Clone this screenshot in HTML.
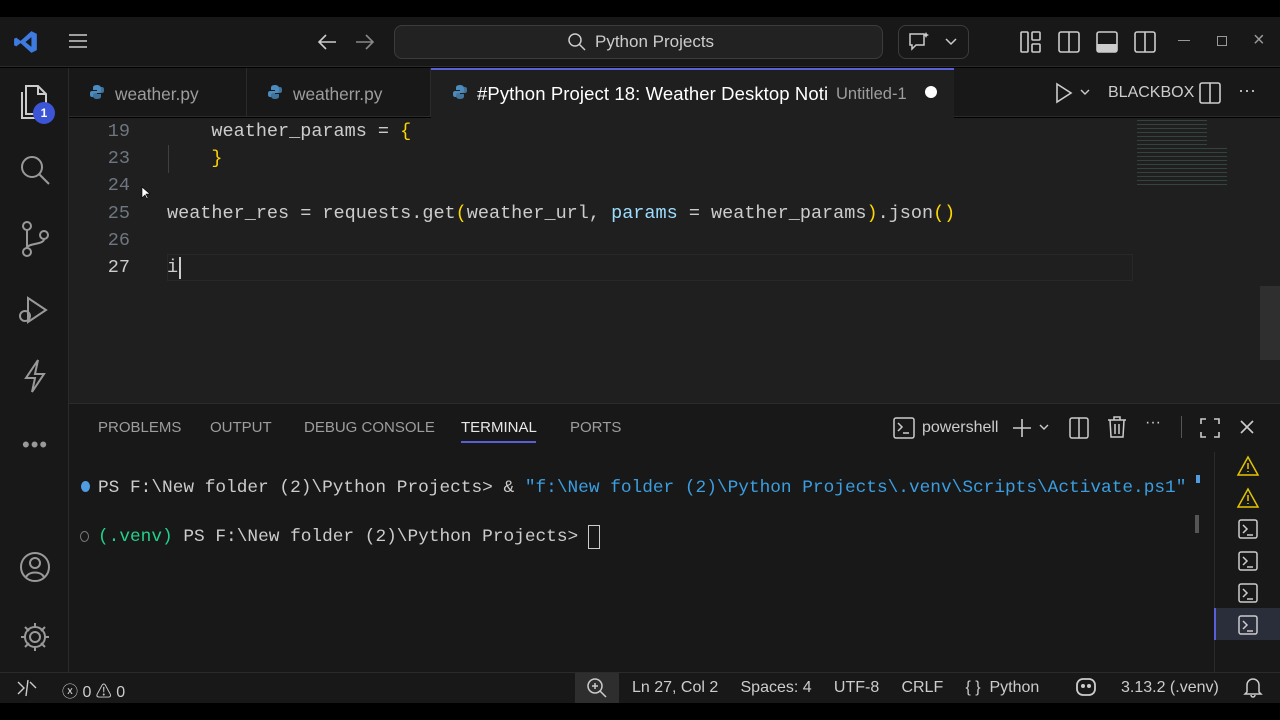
<!DOCTYPE html>
<html><head><style>
*{margin:0;padding:0;box-sizing:border-box}
body{width:1280px;height:720px;background:#000;position:relative;overflow:hidden;font-family:"Liberation Sans",sans-serif;color:#ccc}
.a{position:absolute}
.mono{font-family:"Liberation Mono",monospace;white-space:pre}
svg{position:absolute}
</style></head><body>
<div class="a" style="top:17px;left:0;width:1280px;height:50px;background:#181818;border-bottom:1px solid #2b2b2b"></div>
<svg style="left:13px;top:29px" width="26" height="26" viewBox="0 0 24 24"><path d="M17 2l5 2.5v15L17 22 7 13l-4 3-2-1V9l2-1 4 3 10-9zm0 5.5L11.5 12 17 16.5z" fill="#3d7be0"/></svg>
<svg style="left:68px;top:32px" width="20" height="18" viewBox="0 0 20 18"><path d="M1 3h18M1 9h18M1 15h18" stroke="#ccc" stroke-width="1.6"/></svg>
<svg style="left:316px;top:32px" width="22" height="20" viewBox="0 0 22 20"><path d="M20 10H3M10 3l-7 7 7 7" stroke="#ccc" stroke-width="1.6" fill="none"/></svg>
<svg style="left:354px;top:32px" width="22" height="20" viewBox="0 0 22 20"><path d="M2 10h17M12 3l7 7-7 7" stroke="#888" stroke-width="1.6" fill="none"/></svg>
<div class="a" style="left:394px;top:25px;width:489px;height:34px;border:1px solid #3c3c3c;border-radius:8px;background:#222"></div>
<svg style="left:567px;top:32px" width="20" height="20" viewBox="0 0 20 20"><circle cx="8" cy="8" r="6" stroke="#ccc" stroke-width="1.5" fill="none"/><path d="M12.5 12.5L18 18" stroke="#ccc" stroke-width="1.5"/></svg>
<div class="a" style="left:595px;top:32px;font-size:17px;color:#ccc">Python Projects</div>
<div class="a" style="left:898px;top:25px;width:71px;height:34px;border:1px solid #3c3c3c;border-radius:8px"></div>
<svg style="left:906px;top:30px" width="60" height="24" viewBox="0 0 60 24"><path d="M4 4h14v11H10l-4 4v-4H4z" stroke="#ccc" stroke-width="1.5" fill="none"/><path d="M20 2l1 2 2 1-2 1-1 2-1-2-2-1 2-1z" fill="#ccc"/><path d="M40 9l5 5 5-5" stroke="#ccc" stroke-width="1.5" fill="none"/></svg>
<svg style="left:1020px;top:30px" width="140" height="24" viewBox="0 0 140 24"><g stroke="#ccc" stroke-width="1.6" fill="none"><rect x="1" y="2" width="7" height="20" rx="1"/><rect x="12" y="2" width="8" height="8" rx="1"/><rect x="12" y="14" width="8" height="8" rx="1"/><rect x="39" y="2" width="20" height="20" rx="2"/><path d="M49 2v20"/><rect x="77" y="2" width="20" height="20" rx="2"/><rect x="115" y="2" width="20" height="20" rx="2"/><path d="M125 2v20"/></g><rect x="77" y="14" width="20" height="8" fill="#ccc"/></svg>
<div class="a" style="left:1178px;top:40px;width:12px;height:1px;background:#999"></div>
<div class="a" style="left:1217px;top:36px;width:10px;height:10px;border:1px solid #999"></div>
<div class="a" style="left:1253px;top:29px;font-size:20px;color:#999">×</div>

<div class="a" style="left:0;top:68px;width:69px;height:604px;background:#181818;border-right:1px solid #2b2b2b"></div>
<svg style="left:18px;top:82px" width="34" height="40" viewBox="0 0 34 40"><path d="M8 4h12l8 8v20H8z M20 4v8h8 M4 10v26h18" stroke="#ccc" stroke-width="2" fill="none"/></svg>
<div class="a" style="left:33px;top:102px;width:22px;height:22px;border-radius:50%;background:#3b55d6;color:#fff;font-size:12px;font-weight:bold;text-align:center;line-height:22px">1</div>
<svg style="left:18px;top:153px" width="34" height="34" viewBox="0 0 34 34"><circle cx="14" cy="14" r="10" stroke="#999" stroke-width="2" fill="none"/><path d="M21 21l10 10" stroke="#999" stroke-width="2"/></svg>
<svg style="left:18px;top:220px" width="34" height="38" viewBox="0 0 34 38"><g stroke="#999" stroke-width="2" fill="none"><circle cx="9" cy="6" r="4"/><circle cx="9" cy="32" r="4"/><circle cx="26" cy="15" r="4"/><path d="M9 10v18M26 19c0 6-17 4-17 9"/></g></svg>
<svg style="left:16px;top:292px" width="36" height="36" viewBox="0 0 36 36"><g stroke="#999" stroke-width="2" fill="none"><path d="M12 6l18 12-18 12z"/><circle cx="9" cy="24" r="5"/></g></svg>
<svg style="left:20px;top:358px" width="30" height="36" viewBox="0 0 30 36"><path d="M18 2L6 20h9l-3 14 12-18h-9z" stroke="#999" stroke-width="2" fill="none"/></svg>
<div class="a" style="left:22px;top:432px;font-size:22px;color:#999;letter-spacing:1px">•••</div>
<svg style="left:18px;top:550px" width="34" height="34" viewBox="0 0 34 34"><g stroke="#999" stroke-width="2" fill="none"><circle cx="17" cy="17" r="14"/><circle cx="17" cy="13" r="5"/><path d="M8 27c3-6 15-6 18 0"/></g></svg>
<svg style="left:18px;top:620px" width="34" height="34" viewBox="0 0 34 34"><g stroke="#999" stroke-width="2" fill="none"><circle cx="17" cy="17" r="5"/><path d="M17 3v5M17 26v5M3 17h5M26 17h5M7 7l4 4M23 23l4 4M7 27l4-4M23 11l4-4"/><circle cx="17" cy="17" r="10"/></g></svg>

<div class="a" style="left:69px;top:68px;width:1211px;height:49px;background:#181818;border-bottom:1px solid #2b2b2b"></div>
<div class="a" style="left:69px;top:68px;width:178px;height:49px;border-right:1px solid #2b2b2b"></div>
<div class="a" style="left:247px;top:68px;width:184px;height:49px;border-right:1px solid #2b2b2b"></div>
<div class="a" style="left:431px;top:68px;width:523px;height:50px;background:#1f1f1f;border-top:2px solid #5a5fd6"></div>
<svg style="left:89px;top:84px" width="16" height="16" viewBox="0 0 16 16"><path d="M8 1C4 1 4 3 4 4v2h4v1H3C1 7 1 9 1 10s0 3 2 3h1v-2c0-1 1-2 2-2h4c1 0 2-1 2-2V4c0-2-2-3-4-3z" fill="#4b8bbe"/><path d="M8 15c4 0 4-2 4-3v-2H8V9h5c2 0 2-2 2-3s0-3-2-3h-1v2c0 1-1 2-2 2H6c-1 0-2 1-2 2v3c0 2 2 3 4 3z" fill="#4b8bbe" opacity=".8"/></svg>
<svg style="left:267px;top:84px" width="16" height="16" viewBox="0 0 16 16"><path d="M8 1C4 1 4 3 4 4v2h4v1H3C1 7 1 9 1 10s0 3 2 3h1v-2c0-1 1-2 2-2h4c1 0 2-1 2-2V4c0-2-2-3-4-3z" fill="#4b8bbe"/><path d="M8 15c4 0 4-2 4-3v-2H8V9h5c2 0 2-2 2-3s0-3-2-3h-1v2c0 1-1 2-2 2H6c-1 0-2 1-2 2v3c0 2 2 3 4 3z" fill="#4b8bbe" opacity=".8"/></svg>
<svg style="left:452px;top:84px" width="16" height="16" viewBox="0 0 16 16"><path d="M8 1C4 1 4 3 4 4v2h4v1H3C1 7 1 9 1 10s0 3 2 3h1v-2c0-1 1-2 2-2h4c1 0 2-1 2-2V4c0-2-2-3-4-3z" fill="#4b8bbe"/><path d="M8 15c4 0 4-2 4-3v-2H8V9h5c2 0 2-2 2-3s0-3-2-3h-1v2c0 1-1 2-2 2H6c-1 0-2 1-2 2v3c0 2 2 3 4 3z" fill="#4b8bbe" opacity=".8"/></svg>
<div class="a" style="left:115px;top:84px;font-size:17.3px;color:#9d9d9d">weather.py</div>
<div class="a" style="left:293px;top:84px;font-size:17.3px;color:#9d9d9d">weatherr.py</div>
<div class="a" style="left:477px;top:83px;font-size:18.5px;color:#fff;letter-spacing:0.1px">#Python Project 18: Weather Desktop Noti</div>
<div class="a" style="left:836px;top:85px;font-size:16.5px;color:#9d9d9d">Untitled-1</div>
<div class="a" style="left:925px;top:86px;width:12px;height:12px;border-radius:50%;background:#fff"></div>
<svg style="left:1054px;top:82px" width="40" height="22" viewBox="0 0 40 22"><path d="M3 2l14 9-14 9z" stroke="#ccc" stroke-width="1.6" fill="none"/><path d="M27 8l4 4 4-4" stroke="#ccc" stroke-width="1.4" fill="none"/></svg>
<div class="a" style="left:1108px;top:84px;font-size:16px;color:#ccc">BLACKBOX</div>
<svg style="left:1199px;top:82px" width="22" height="22" viewBox="0 0 22 22"><rect x="1" y="1" width="20" height="20" rx="2" stroke="#ccc" stroke-width="1.6" fill="none"/><path d="M11 1v20" stroke="#ccc" stroke-width="1.6"/></svg>
<div class="a" style="left:1238px;top:80px;font-size:18px;color:#ccc">···</div>

<div class="a" style="left:69px;top:118px;width:1211px;height:285px;background:#1f1f1f"></div>
<div class="a" style="left:167px;top:254px;width:966px;height:27px;border:1px solid #282828"></div>
<div class="a" style="left:168px;top:145px;width:1px;height:28px;background:#404040"></div>
<div class="a mono" style="left:92px;top:118px;font-size:18.5px;line-height:27.2px;color:#6e7681;text-align:right;width:38px">19
23
24
25
26
<span style="color:#ccc">27</span></div>
<div class="a mono" style="left:167px;top:118px;font-size:18.5px;line-height:27.2px;color:#ccc">    weather_params = <span style="color:#ffd700">{</span>
    <span style="color:#ffd700">}</span>

weather_res = requests.get<span style="color:#ffd700">(</span>weather_url, <span style="color:#9cdcfe">params</span> = weather_params<span style="color:#ffd700">)</span>.json<span style="color:#ffd700">()</span>

i</div>
<div class="a" style="left:179px;top:257px;width:2px;height:22px;background:#ccc"></div>
<svg style="left:141px;top:186px" width="10" height="14" viewBox="0 0 10 14"><path d="M1 1v11l3-3 2 4 1-1-2-4h4z" fill="#fff" stroke="#000" stroke-width=".6"/></svg>
<div class="a" style="left:1137px;top:118px;width:100px;height:70px;opacity:.5;background:repeating-linear-gradient(#1f1f1f 0 2px,#4a6a5a 2px 3px,#1f1f1f 3px 4px);clip-path:polygon(0 0,70% 0,70% 40%,90% 40%,90% 100%,0 100%)"></div>
<div class="a" style="left:1260px;top:286px;width:20px;height:74px;background:#2f2f2f"></div>

<div class="a" style="left:69px;top:403px;width:1211px;height:269px;background:#181818;border-top:1px solid #2b2b2b"></div>
<div class="a" style="left:98px;top:419px;font-size:15px;color:#9d9d9d">PROBLEMS</div>
<div class="a" style="left:210px;top:419px;font-size:15px;color:#9d9d9d">OUTPUT</div>
<div class="a" style="left:304px;top:419px;font-size:15px;color:#9d9d9d">DEBUG CONSOLE</div>
<div class="a" style="left:461px;top:419px;font-size:15px;color:#e7e7e7">TERMINAL</div>
<div class="a" style="left:461px;top:441px;width:75px;height:2px;background:#5a5fd6"></div>
<div class="a" style="left:570px;top:419px;font-size:15px;color:#9d9d9d">PORTS</div>
<svg style="left:893px;top:417px" width="22" height="22" viewBox="0 0 22 22"><rect x="1" y="1" width="20" height="20" rx="2" stroke="#ccc" stroke-width="1.5" fill="none"/><path d="M5 6l4 4-4 4M10 16h6" stroke="#ccc" stroke-width="1.5" fill="none"/></svg>
<div class="a" style="left:922px;top:419px;font-size:16px;color:#ccc">powershell</div>
<svg style="left:1012px;top:417px" width="40" height="22" viewBox="0 0 40 22"><path d="M10 2v18M1 11h18" stroke="#ccc" stroke-width="1.6"/><path d="M28 8l4 4 4-4" stroke="#ccc" stroke-width="1.4" fill="none"/></svg>
<svg style="left:1068px;top:417px" width="22" height="22" viewBox="0 0 22 22"><rect x="2" y="1" width="18" height="20" rx="2" stroke="#ccc" stroke-width="1.5" fill="none"/><path d="M11 1v20" stroke="#ccc" stroke-width="1.5"/></svg>
<svg style="left:1106px;top:415px" width="22" height="24" viewBox="0 0 22 24"><path d="M2 5h18M8 5V2h6v3M4 5l1 17h12l1-17M9 9v10M13 9v10" stroke="#ccc" stroke-width="1.5" fill="none"/></svg>
<div class="a" style="left:1145px;top:414px;font-size:16px;color:#ccc">···</div>
<div class="a" style="left:1181px;top:416px;width:1px;height:22px;background:#555"></div>
<svg style="left:1199px;top:417px" width="22" height="22" viewBox="0 0 22 22"><path d="M2 7V2h5M15 2h5v5M20 15v5h-5M7 20H2v-5" stroke="#ccc" stroke-width="1.6" fill="none"/></svg>
<svg style="left:1239px;top:419px" width="16" height="16" viewBox="0 0 16 16"><path d="M2 2l12 12M14 2L2 14" stroke="#ccc" stroke-width="1.6"/></svg>

<div class="a" style="left:81px;top:481px;width:9px;height:11px;border-radius:50%;background:#4f9de0"></div>
<div class="a mono" style="left:98px;top:476px;font-size:17.8px;line-height:24px;color:#ccc">PS F:\New folder (2)\Python Projects&gt; &amp; <span style="color:#3b9ee0">"f:\New folder (2)\Python Projects\.venv\Scripts\Activate.ps1"</span></div>
<div class="a" style="left:80px;top:531px;width:9px;height:11px;border-radius:50%;border:1.5px solid #777"></div>
<div class="a mono" style="left:98px;top:525px;font-size:17.8px;line-height:24px;color:#ccc"><span style="color:#23d18b">(.venv)</span> PS F:\New folder (2)\Python Projects&gt; </div>
<div class="a" style="left:588px;top:525px;width:12px;height:24px;border:1.5px solid #ccc"></div>
<div class="a" style="left:1196px;top:475px;width:4px;height:8px;background:#4f9de0"></div>
<div class="a" style="left:1195px;top:515px;width:4px;height:18px;background:#555"></div>
<div class="a" style="left:1214px;top:452px;width:66px;height:220px;border-left:1px solid #2b2b2b"></div>
<div class="a" style="left:1214px;top:608px;width:66px;height:32px;background:#2a2d3a;border-left:2px solid #5a5fd6"></div>
<svg style="left:1236px;top:455px" width="24" height="185" viewBox="0 0 24 185"><g stroke="#e5c400" stroke-width="1.5" fill="none"><path d="M12 2L2 20h20zM12 8v6M12 16v1"/><path d="M12 34L2 52h20zM12 40v6M12 48v1"/></g><g stroke="#ccc" stroke-width="1.5" fill="none"><rect x="3" y="65" width="18" height="18" rx="2"/><path d="M7 70l4 4-4 4M11 80h6"/><rect x="3" y="97" width="18" height="18" rx="2"/><path d="M7 102l4 4-4 4M11 112h6"/><rect x="3" y="129" width="18" height="18" rx="2"/><path d="M7 134l4 4-4 4M11 144h6"/><rect x="3" y="161" width="18" height="18" rx="2"/><path d="M7 166l4 4-4 4M11 176h6"/></g></svg>

<div class="a" style="left:0;top:672px;width:1280px;height:31px;background:#181818;border-top:1px solid #2b2b2b"></div>
<div class="a" style="left:575px;top:673px;width:44px;height:30px;background:#2e2e2e"></div>
<svg style="left:16px;top:678px" width="22" height="20" viewBox="0 0 22 20"><path d="M2 4l6 6-6 6M12 2l-2 16M14 4l6 6" stroke="#ccc" stroke-width="1.4" fill="none"/></svg>
<div class="a" style="left:62px;top:678px;font-size:16px;color:#ccc">ⓧ 0 <span>⚠</span> 0</div>
<svg style="left:586px;top:677px" width="22" height="22" viewBox="0 0 22 22"><circle cx="9" cy="9" r="7" stroke="#ccc" stroke-width="1.5" fill="none"/><path d="M14 14l6 6M6 9h6M9 6v6" stroke="#ccc" stroke-width="1.5"/></svg>
<div class="a" style="left:632px;top:679px;font-size:16px;color:#ccc;white-space:pre">Ln 27, Col 2     Spaces: 4     UTF-8     CRLF     { }  Python</div>
<svg style="left:1074px;top:676px" width="24" height="22" viewBox="0 0 24 22"><rect x="3" y="3" width="18" height="16" rx="6" stroke="#ccc" stroke-width="1.8" fill="none"/><circle cx="9" cy="10" r="2" fill="#ccc"/><circle cx="15" cy="10" r="2" fill="#ccc"/></svg>
<div class="a" style="left:1121px;top:679px;font-size:16px;color:#ccc">3.13.2 (.venv)</div>
<svg style="left:1243px;top:676px" width="20" height="22" viewBox="0 0 20 22"><path d="M4 16V9a6 6 0 0112 0v7l2 2H2zM8 19a2 2 0 004 0" stroke="#ccc" stroke-width="1.5" fill="none"/></svg>
</body></html>
